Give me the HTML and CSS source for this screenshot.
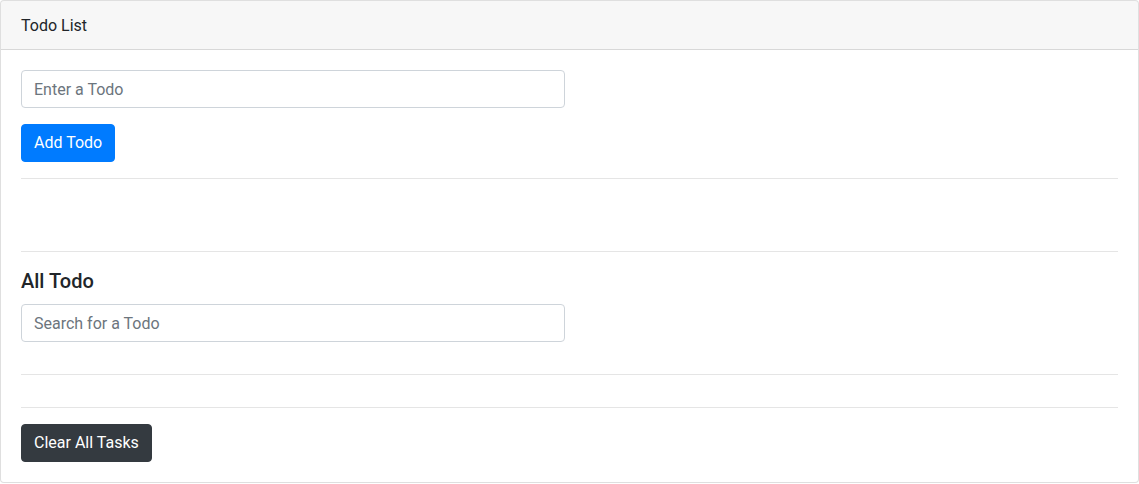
FILE: index.html
```html
<!DOCTYPE html>
<html lang="en">
<head>
<meta charset="utf-8">
<title>Todo List</title>
<link rel="stylesheet" href="styles.css">
</head>
<body>
  <div class="card">
    <div class="card-header">Todo List</div>
    <div class="card-body">
      <div class="form-group">
        <input class="form-control" type="text" placeholder="Enter a Todo">
      </div>
      <button class="btn btn-primary" type="button">Add Todo</button>
      <hr>
      <div class="spacer"></div>
      <hr>
      <h5 class="title">All Todo</h5>
      <div class="form-group search-group">
        <input class="form-control" type="text" placeholder="Search for a Todo">
      </div>
      <hr>
      <ul class="todo-list"></ul>
      <hr>
      <button class="btn btn-dark" type="button">Clear All Tasks</button>
    </div>
  </div>
</body>
</html>
```

FILE: styles.css
```css
* { box-sizing: border-box; }
html, body { margin: 0; padding: 0; }
body {
  font-family: "Segoe UI", Roboto, "Noto Sans", "Liberation Sans", sans-serif;
  font-size: 16px;
  line-height: 24px;
  color: #212529;
  background: #fff;
}
.card {
  width: 100%;
  border: 1px solid rgba(0,0,0,.125);
  border-radius: 4px;
  background: #fff;
}
.card-header {
  padding: 13px 20px 11px;
  background: rgba(0,0,0,.03);
  border-bottom: 1px solid rgba(0,0,0,.125);
  border-radius: 3px 3px 0 0;
  line-height: 24px;
}
.card-body {
  padding: 20px;
  display: flow-root;
}
.form-group {
  margin-bottom: 16px;
}
.search-group {
  margin-bottom: 32px;
}
.form-control {
  display: block;
  width: 544px;
  height: 38px;
  padding: 6px 12px;
  font-family: inherit;
  font-size: 16px;
  line-height: 24px;
  color: #495057;
  background: #fff;
  border: 1px solid #ced4da;
  border-radius: 4px;
  outline: none;
}
.form-control::placeholder {
  color: #6c757d;
  opacity: 1;
}
.btn {
  display: inline-block;
  height: 38px;
  padding: 6px 12px;
  font-family: inherit;
  font-size: 16px;
  line-height: 24px;
  border: 1px solid transparent;
  border-radius: 4px;
  color: #fff;
  cursor: pointer;
  vertical-align: top;
}
.btn-primary {
  background: #007bff;
  border-color: #007bff;
}
.btn-dark {
  background: #343a40;
  border-color: #343a40;
}
hr {
  margin: 16px 0;
  border: 0;
  border-top: 1px solid rgba(0,0,0,.1);
  height: 0;
}
.spacer {
  height: 40px;
}
.title {
  margin: 17px 0 11px;
  font-size: 20px;
  line-height: 24px;
  font-weight: 500;
}
.todo-list {
  display: flow-root;
  list-style: none;
  margin: 0;
  padding: 0;
}
```
